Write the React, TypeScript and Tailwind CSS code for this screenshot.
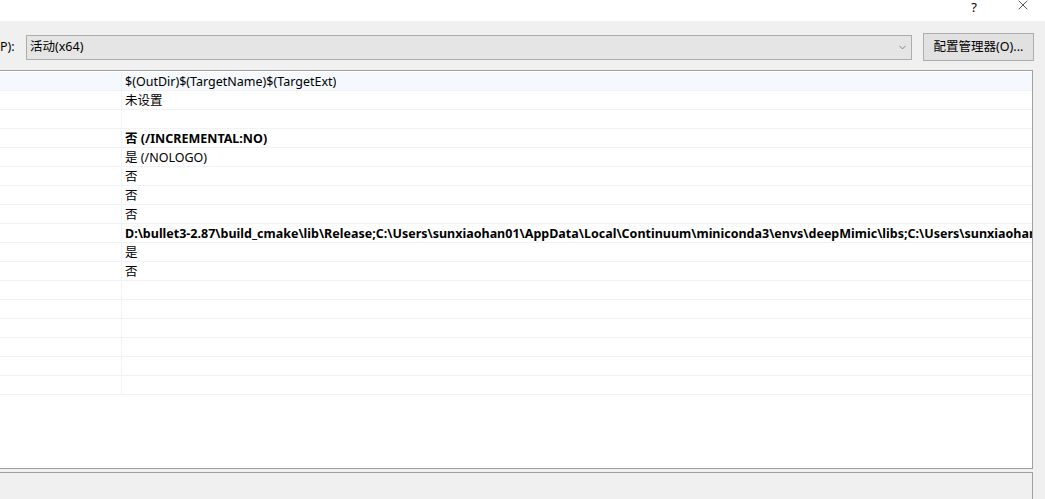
import { ChevronDown, X } from 'lucide-react';

type Row = { value: string; bold?: boolean };

const rows: Row[] = [
  { value: '$(OutDir)$(TargetName)$(TargetExt)' },
  { value: '未设置' },
  { value: '' },
  { value: '否 (/INCREMENTAL:NO)', bold: true },
  { value: '是 (/NOLOGO)' },
  { value: '否' },
  { value: '否' },
  { value: '否' },
  {
    value:
      'D:\\bullet3-2.87\\build_cmake\\lib\\Release;C:\\Users\\sunxiaohan01\\AppData\\Local\\Continuum\\miniconda3\\envs\\deepMimic\\libs;C:\\Users\\sunxiaohan01\\AppData\\Local\\Continuum\\miniconda3\\envs\\deepMimic\\Library\\lib',
    bold: true,
  },
  { value: '是' },
  { value: '否' },
  { value: '' },
  { value: '' },
  { value: '' },
  { value: '' },
  { value: '' },
  { value: '' },
];

export default function App() {
  return (
    <div
      className="w-[1045px] h-[499px] overflow-hidden bg-[#f0f0f0] text-[12.5px] text-black flex flex-col"
      style={{ fontFamily: '"Noto Sans", "Noto Sans CJK SC", sans-serif' }}
    >
      {/* Title bar */}
      <div className="h-[21px] bg-white flex items-start justify-end shrink-0">
        <span className="mt-[-2px] mr-[38px] text-[13px] leading-[18px]">?</span>
        <X size={16} strokeWidth={1} className="mt-[-3px] mr-[14px]" />
      </div>

      {/* Configuration row */}
      <div className="h-[49px] flex items-center shrink-0 pt-[3px]">
        <span className="w-[22px] shrink-0 whitespace-nowrap">P):</span>
        <div className="ml-[4px] w-[886px] h-[25px] bg-[#e5e5e5] border border-[#adadad] flex items-center justify-between pl-[3px] pr-[3px]">
          <span>活动(x64)</span>
          <ChevronDown size={11} strokeWidth={1.6} className="text-[#606060]" />
        </div>
        <button className="ml-[11px] w-[111px] h-[28px] bg-[#e1e1e1] border border-[#adadad] flex items-center justify-center">
          配置管理器(O)...
        </button>
      </div>

      {/* Property grid */}
      <div className="w-[1034px] h-[399px] ml-[-1px] pt-[1px] bg-white border border-[#a0a0a0] shrink-0 overflow-hidden">
        {rows.map((row, i) => (
          <div
            key={i}
            className={`h-[19px] flex border-b border-[#f0f2f5] ${i === 0 ? 'bg-[#f5f8fc]' : ''}`}
          >
            <div className="w-[122px] shrink-0 border-r border-[#f0f2f5]" />
            <div
              className={`pl-[3px] pt-[1px] leading-[17px] whitespace-nowrap overflow-hidden ${row.bold ? 'font-bold' : ''}`}
            >
              {row.value}
            </div>
          </div>
        ))}
      </div>

      {/* Description panel */}
      <div className="mt-[3px] w-[1034px] ml-[-1px] flex-1 bg-[#f0f0f0] border border-[#a0a0a0] border-b-0" />
    </div>
  );
}
